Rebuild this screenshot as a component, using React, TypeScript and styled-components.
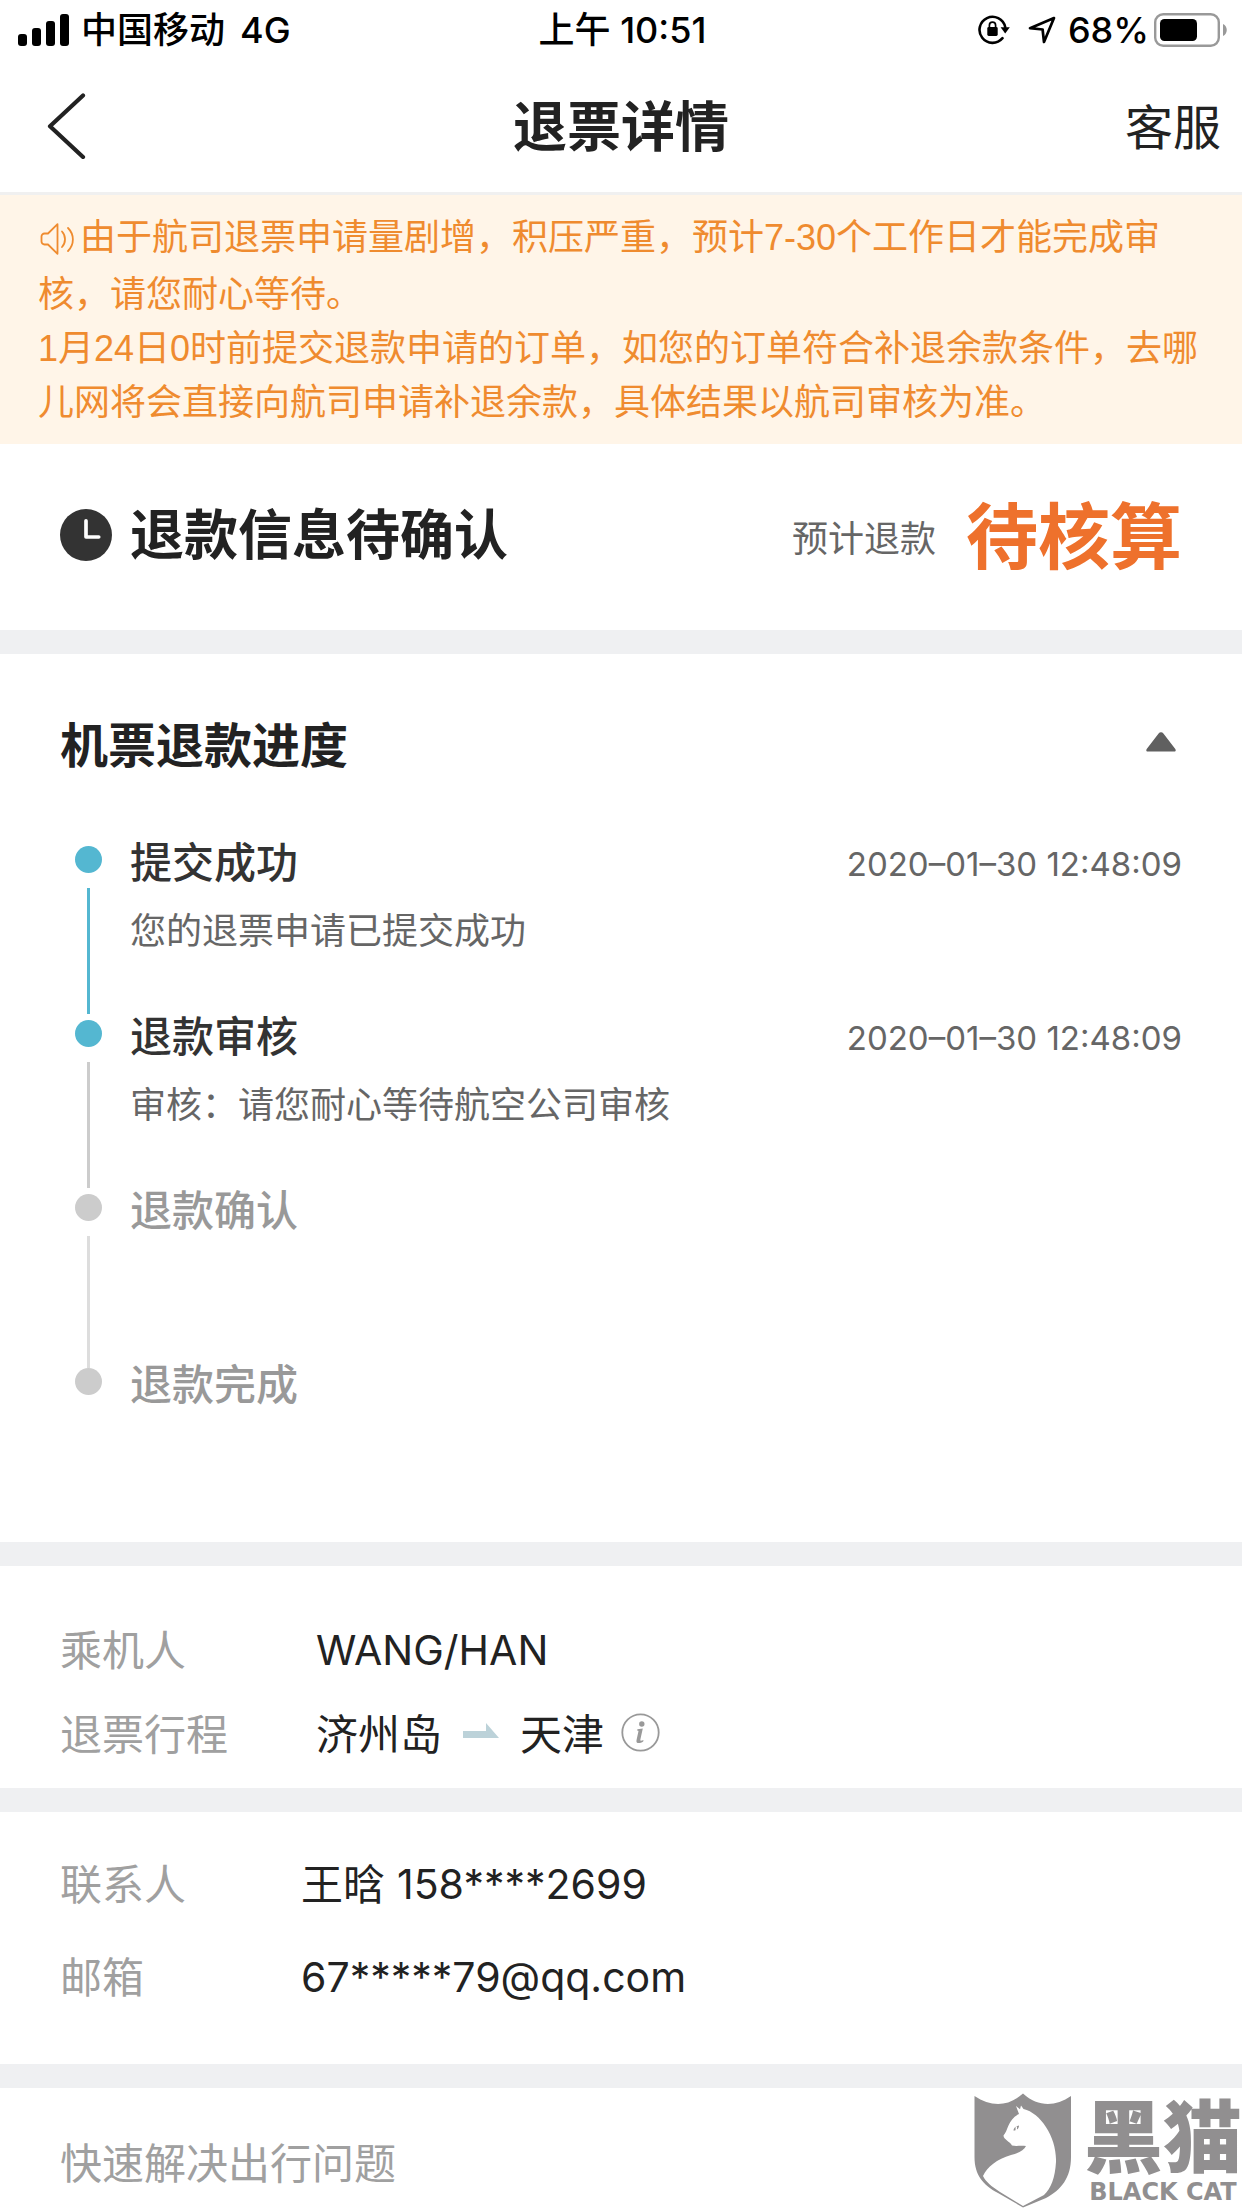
import React, { useState } from "react";
import styled, { createGlobalStyle } from "styled-components";

const GlobalStyle = createGlobalStyle`
  *, *::before, *::after { box-sizing: border-box; }
  html, body, #root { min-height: 100vh; }
  body {
    margin: 0;
    background: #fff;
    color: #222;
    font-family: "Noto Sans CJK SC", sans-serif;
    font-size: 36px;
  }
  h1, h2, h3, p, ol, dl, dd, dt { margin: 0; padding: 0; font-weight: 400; }
  button { border: 0; padding: 0; background: none; color: inherit; font: inherit; cursor: pointer; }
  svg { display: block; flex: none; }
`;

const Screen = styled.div`
  position: relative;
  min-height: 100vh;
  overflow: hidden;
  display: flex;
  flex-direction: column;
`;

const StatusBar = styled.div`
  display: grid;
  grid-template-columns: 1fr auto 1fr;
  align-items: center;
  height: 60px;
  padding: 0 15px 0 18px;
  color: #000;
  font-family: Inter, "Noto Sans CJK SC", sans-serif;
  font-weight: 500;
  line-height: 60px;
`;

const StatusGroup = styled.div<{ $end?: boolean; $gap: number }>`
  display: flex;
  align-items: center;
  justify-content: ${(p) => (p.$end ? "flex-end" : "flex-start")};
  gap: ${(p) => p.$gap}px;
`;

const NavBar = styled.header`
  display: grid;
  grid-template-columns: 1fr auto 1fr;
  align-items: center;
  height: 135px;
  padding: 0 21px 4px;
  border-bottom: 3px solid #f0f0f0;
`;

const NavTitle = styled.h1`
  font-size: 54px;
  font-weight: 700;
  line-height: 72px;
`;

const BackButton = styled.button`
  justify-self: start;
  padding: 4px 0 0 20px;
`;

const ServiceButton = styled.button`
  justify-self: end;
  font-size: 48px;
  line-height: 72px;
`;

const Notice = styled.section`
  padding: 16px 38px 14px;
  background: #fff5e8;
  color: #ef8b2f;
  font-family: "Liberation Sans", "Noto Sans CJK SC", sans-serif;
  line-height: 54px;
`;

const NoticeIcon = styled.span`
  display: inline-block;
  width: 42px;
  height: 55px;
  padding-left: 2px;
  vertical-align: -18px;
  svg { margin-top: 10px; }
`;

const Section = styled.section<{ $pad: string; $last?: boolean }>`
  padding: ${(p) => p.$pad};
  border-bottom: ${(p) => (p.$last ? "0" : "24px solid #eff0f2")};
`;

const Summary = styled.div`
  display: flex;
  align-items: center;
  line-height: 72px;
  svg { margin-top: 6px; }
`;

const SummaryTitle = styled.h2`
  margin-left: 18px;
  font-size: 54px;
  font-weight: 700;
`;

const RefundLabel = styled.span`
  margin-left: auto;
  padding-top: 8px;
  color: #666;
  line-height: 64px;
`;

const RefundValue = styled.strong`
  margin-left: 30px;
  color: #ee712c;
  font-size: 72px;
  font-weight: 700;
`;

const ProgressHead = styled.div`
  display: flex;
  align-items: center;
  justify-content: space-between;
  padding-right: 6px;
`;

const ProgressTitle = styled.h2`
  font-size: 48px;
  font-weight: 700;
  line-height: 72px;
`;

const Steps = styled.ol`
  display: flex;
  flex-direction: column;
  padding: 50px 0 0 15px;
  list-style: none;
`;

const Step = styled.li`
  display: grid;
  grid-template-columns: 27px 1fr;
  column-gap: 28px;
  height: 174px;
`;

const Rail = styled.div<{ $color: string }>`
  display: flex;
  flex-direction: column;
  align-items: center;
  padding-top: 18px;
  &::before {
    content: "";
    width: 27px;
    height: 27px;
    border-radius: 50%;
    background: ${(p) => p.$color};
  }
`;

const RailLine = styled.span<{ $color: string; $long?: boolean }>`
  width: 3px;
  height: ${(p) => (p.$long ? 132 : 126)}px;
  margin: 15px 0 -18px;
  background: ${(p) => p.$color};
`;

const StepRow = styled.div`
  display: flex;
  justify-content: space-between;
  align-items: center;
`;

const StepTitle = styled.h3<{ $muted?: boolean }>`
  color: ${(p) => (p.$muted ? "#999" : "#333")};
  font-size: 42px;
  font-weight: 500;
  line-height: 64px;
`;

const StepTime = styled.time`
  padding-top: 8px;
  color: #666;
  font-family: Inter, sans-serif;
  font-size: 33px;
  line-height: 56px;
`;

const StepText = styled.p`
  color: #666;
  line-height: 72px;
`;

const Details = styled.dl<{ $label: number; $row: number }>`
  display: grid;
  grid-template-columns: ${(p) => p.$label}px 1fr;
  grid-auto-rows: ${(p) => p.$row}px;
  align-items: center;
  font-size: 42px;
  line-height: 64px;
  dt { color: #a0a0a0; }
  dd { display: flex; align-items: center; gap: 12px; }
`;

const Latin = styled.span`
  padding-top: 4px;
  font-family: Inter, sans-serif;
  font-size: 41px;
`;

const Route = styled.span`
  display: flex;
  align-items: center;
  gap: 21px;
`;

const InfoButton = styled.button`
  margin-left: 5px;
`;

const Hint = styled.p`
  color: #a0a0a0;
  font-size: 42px;
  line-height: 72px;
`;

const Brand = styled.div`
  position: absolute;
  right: 0;
  bottom: 0;
  display: flex;
  align-items: flex-start;
  gap: 12px;
  height: 115px;
  color: #918f90;
`;

const BrandText = styled.div`
  display: flex;
  flex-direction: column;
  align-items: center;
`;

const BrandName = styled.span`
  font-size: 79px;
  font-weight: 900;
  line-height: 80px;
`;

const BrandLatin = styled.span`
  margin-top: 5px;
  font-family: "DejaVu Sans", sans-serif;
  font-size: 24px;
  font-weight: 700;
  line-height: 28px;
`;

const BLUE = "#54b7d1";
const GREY = "#ccc";

type StepData = { title: string; time?: string; text?: string; done?: boolean; line?: string };

const steps: StepData[] = [
  { title: "提交成功", time: "2020–01–30 12:48:09", text: "您的退票申请已提交成功", done: true, line: BLUE },
  { title: "退款审核", time: "2020–01–30 12:48:09", text: "审核：请您耐心等待航空公司审核", done: true, line: GREY },
  { title: "退款确认", line: "#ddd" },
  { title: "退款完成" },
];

const SignalIcon = () => (
  <svg width="51" height="32" viewBox="0 0 51 32" aria-hidden="true">
    <rect x="0" y="20" width="9" height="12" rx="3" />
    <rect x="14" y="14" width="9" height="18" rx="3" />
    <rect x="28" y="7" width="9" height="25" rx="3" />
    <rect x="42" y="0" width="9" height="32" rx="3" />
  </svg>
);

const LockIcon = () => (
  <svg width="32" height="30" viewBox="0 0 32 30" aria-hidden="true">
    <path d="M24.5 23.2A13 13 0 1 1 27.2 12" fill="none" stroke="#000" strokeWidth="2.6" strokeLinecap="round" />
    <path d="M22.6 12.2h9.2l-4.6 6.4z" />
    <rect x="9.3" y="12" width="10.4" height="9" rx="1.4" />
    <path d="M11.4 12.5v-2.3a3.1 3.1 0 0 1 6.2 0v2.3" fill="none" stroke="#000" strokeWidth="1.7" />
  </svg>
);

const LocationIcon = () => (
  <svg width="28" height="28" viewBox="0 0 28 28" aria-hidden="true">
    <path d="M26 2 2 12.2l12.6 1.3L16 26z" fill="none" stroke="#000" strokeWidth="2.7" strokeLinejoin="round" />
  </svg>
);

const BatteryIcon = () => (
  <svg width="73" height="34" viewBox="0 0 73 34" aria-hidden="true">
    <rect x="1.2" y="1.2" width="63.6" height="31.6" rx="8" fill="none" stroke="#999" strokeWidth="2.4" />
    <rect x="6" y="6" width="37" height="22" rx="4.5" />
    <path d="M69 11c5 2 5 10 0 12z" fill="#999" />
  </svg>
);

const BackIcon = () => (
  <svg width="48" height="66" viewBox="0 0 48 66" fill="none" stroke="#222" strokeWidth="4.2" strokeLinecap="round" strokeLinejoin="round" aria-hidden="true">
    <path d="M42 2.5 9 33.2 42 64" />
  </svg>
);

const SpeakerIcon = () => (
  <svg width="35" height="32" viewBox="0 0 35 32" fill="none" stroke="currentColor" strokeWidth="1.8" strokeLinecap="round" strokeLinejoin="round" aria-hidden="true">
    <path d="M17.5 1.2v29.6L8 21.5H4.5a3 3 0 0 1-3-3v-5a3 3 0 0 1 3-3H8z" />
    <path d="M22 8.5c4 4.3 4 11.2 0 15.5M28 5c6.5 6.5 6.5 16.5 0 23" />
  </svg>
);

const ClockIcon = () => (
  <svg width="52" height="52" viewBox="0 0 51 51" aria-hidden="true">
    <circle cx="25.5" cy="25.5" r="25.5" fill="#333" />
    <path d="M25.5 11.5V27.5H38" fill="none" stroke="#fff" strokeWidth="3.6" strokeLinecap="round" strokeLinejoin="round" />
  </svg>
);

const CollapseIcon = ({ flipped }: { flipped: boolean }) => (
  <svg width="30" height="20" viewBox="0 0 30 20" aria-hidden="true">
    <path
      d="M12.6 1.5a3 3 0 0 1 4.8 0l11.9 15.5c.8 1.2.5 2.5-1 2.5H1.7c-1.5 0-1.8-1.3-1-2.5z"
      fill="#606060"
      transform={flipped ? "rotate(180 15 10)" : undefined}
    />
  </svg>
);

const ArrowIcon = () => (
  <svg width="36" height="18" viewBox="0 0 36 18" aria-hidden="true">
    <path d="M0 8h23V0l13 15H0z" fill="#bcd2d9" />
  </svg>
);

const InfoIcon = () => (
  <svg width="39" height="39" viewBox="0 0 39 39" aria-hidden="true">
    <circle cx="19.5" cy="19.5" r="18.2" fill="none" stroke="#999" strokeWidth="1.8" />
    <circle cx="20.8" cy="11" r="2.7" fill="#999" />
    <path d="M16.5 16.3l5.3-.8-2.5 11.2c-.2 1.2.8 1.3 3.2.2l-.3 1.5c-3.5 2.5-7.5 2.3-6.7-1.2l1.9-8.6c.2-.9-.2-1.1-1.5-1.1z" fill="#999" />
  </svg>
);

const ShieldCat = () => (
  <svg width="98" height="115" viewBox="0 0 98 115" aria-hidden="true">
    <path d="M.5 3C17 14 34 14 49 .5 64 14 81 14 97 3v61c0 21-10 33-25 41l-23 9.5L24 100C9 92 .5 82 .5 64z" fill="currentColor" />
    <path d="M42 13l4 3.2L47 12.5l2.5 3.5C67 20 83 45 82 69c-1 16-5 26-12 33l-21 11-23-14C17 93 12 89 9 83c4-9 14-17 28-21 8-2 13-5 15-9-6-.6-10 .5-14-.5-2-4-8.5-6-8.5-10C34 38 34 26 45 21z" fill="#fff" />
    <path d="M39.5 37c.5-2.5 2.5-4 5.5-4.5 0 3-2 5-5.5 5z" fill="currentColor" />
    <path d="M42.3 33.5v4.5" stroke="#fff" strokeWidth="1.5" />
  </svg>
);

export default function App() {
  const [open, setOpen] = useState(true);
  return (
    <>
      <GlobalStyle />
      <Screen>
        <StatusBar>
          <StatusGroup $gap={12}>
            <SignalIcon />
            <StatusGroup $gap={15}>
              <span>中国移动</span>
              <span>4G</span>
            </StatusGroup>
          </StatusGroup>
          <span>上午 10:51</span>
          <StatusGroup $end $gap={5}>
            <StatusGroup $gap={12}>
              <StatusGroup $gap={18}>
                <LockIcon />
                <LocationIcon />
              </StatusGroup>
              <span>68%</span>
            </StatusGroup>
            <BatteryIcon />
          </StatusGroup>
        </StatusBar>

        <NavBar>
          <BackButton type="button" aria-label="返回"><BackIcon /></BackButton>
          <NavTitle>退票详情</NavTitle>
          <ServiceButton type="button">客服</ServiceButton>
        </NavBar>

        <Notice>
          <p>
            <NoticeIcon><SpeakerIcon /></NoticeIcon>
            由于航司退票申请量剧增，积压严重，预计7-30个工作日才能完成审核，请您耐心等待。
          </p>
          <p>1月24日0时前提交退款申请的订单，如您的订单符合补退余款条件，去哪儿网将会直接向航司申请补退余款，具体结果以航司审核为准。</p>
        </Notice>

        <Section $pad="52px 60px 62px">
          <Summary>
            <ClockIcon />
            <SummaryTitle>退款信息待确认</SummaryTitle>
            <RefundLabel>预计退款</RefundLabel>
            <RefundValue>待核算</RefundValue>
          </Summary>
        </Section>

        <Section $pad="52px 60px 18px">
          <ProgressHead>
            <ProgressTitle>机票退款进度</ProgressTitle>
            <button type="button" aria-label="收起进度" aria-expanded={open} onClick={() => setOpen(!open)}>
              <CollapseIcon flipped={!open} />
            </button>
          </ProgressHead>
          {open && (
            <Steps>
              {steps.map((s) => (
                <Step key={s.title}>
                  <Rail $color={s.done ? BLUE : GREY}>
                    {s.line && <RailLine $color={s.line} $long={!s.done} />}
                  </Rail>
                  <div>
                    <StepRow>
                      <StepTitle $muted={!s.done}>{s.title}</StepTitle>
                      {s.time && <StepTime>{s.time}</StepTime>}
                    </StepRow>
                    {s.text && <StepText>{s.text}</StepText>}
                  </div>
                </Step>
              ))}
            </Steps>
          )}
        </Section>

        <Section $pad="40px 60px 14px">
          <Details $label={256} $row={84}>
            <dt>乘机人</dt>
            <dd><Latin>WANG/HAN</Latin></dd>
            <dt>退票行程</dt>
            <dd>
              <Route>
                <span>济州岛</span>
                <ArrowIcon />
                <span>天津</span>
              </Route>
              <InfoButton type="button" aria-label="行程说明"><InfoIcon /></InfoButton>
            </dd>
          </Details>
        </Section>

        <Section $pad="23px 60px 43px">
          <Details $label={241} $row={93}>
            <dt>联系人</dt>
            <dd>
              <span>王晗</span>
              <Latin>158****2699</Latin>
            </dd>
            <dt>邮箱</dt>
            <dd><Latin>67*****79@qq.com</Latin></dd>
          </Details>
        </Section>

        <Section $pad="37px 60px 11px" $last>
          <Hint>快速解决出行问题</Hint>
        </Section>

        <Brand>
          <ShieldCat />
          <BrandText>
            <BrandName>黑猫</BrandName>
            <BrandLatin>BLACK CAT</BrandLatin>
          </BrandText>
        </Brand>
      </Screen>
    </>
  );
}
